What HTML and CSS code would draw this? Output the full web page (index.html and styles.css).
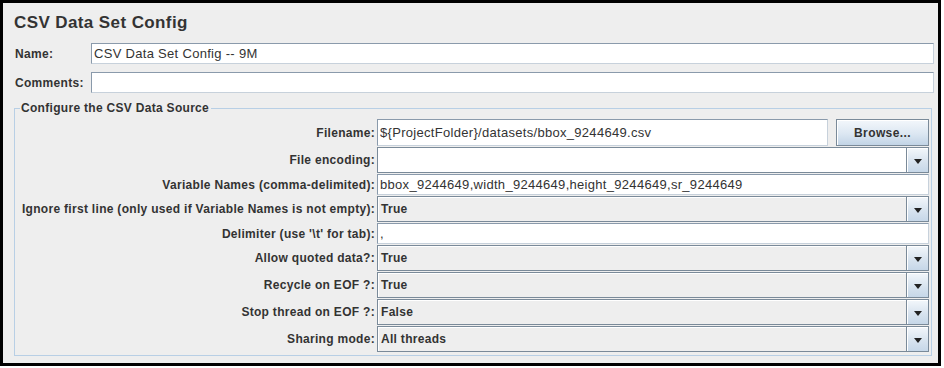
FILE: index.html
```html
<!DOCTYPE html>
<html>

<head>
  <meta charset="utf-8">
  <title>CSV Data Set Config</title>
  <link rel="stylesheet" href="styles.css">
</head>

<body>
  <div class="panel">
    <h1 class="title">CSV Data Set Config</h1>

    <div class="top-row">
      <label class="top-label">Name:</label>
      <div class="text-field">CSV Data Set Config -- 9M</div>
    </div>

    <div class="top-row">
      <label class="top-label">Comments:</label>
      <div class="text-field"></div>
    </div>

    <fieldset class="group">
      <legend>Configure the CSV Data Source</legend>

      <div class="form-grid">
        <label class="row-label">Filename:</label>
        <div class="file-row">
          <div class="text-field">${ProjectFolder}/datasets/bbox_9244649.csv</div>
          <button class="browse-btn">Browse...</button>
        </div>

        <label class="row-label">File encoding:</label>
        <div class="combo editable">
          <span class="combo-value"></span>
          <span class="combo-arrow"></span>
        </div>

        <label class="row-label">Variable Names (comma-delimited):</label>
        <div class="text-field">bbox_9244649,width_9244649,height_9244649,sr_9244649</div>

        <label class="row-label">Ignore first line (only used if Variable Names is not empty):</label>
        <div class="combo">
          <span class="combo-value">True</span>
          <span class="combo-arrow"></span>
        </div>

        <label class="row-label">Delimiter (use '\t' for tab):</label>
        <div class="text-field">,</div>

        <label class="row-label">Allow quoted data?:</label>
        <div class="combo">
          <span class="combo-value">True</span>
          <span class="combo-arrow"></span>
        </div>

        <label class="row-label">Recycle on EOF ?:</label>
        <div class="combo">
          <span class="combo-value">True</span>
          <span class="combo-arrow"></span>
        </div>

        <label class="row-label">Stop thread on EOF ?:</label>
        <div class="combo">
          <span class="combo-value">False</span>
          <span class="combo-arrow"></span>
        </div>

        <label class="row-label">Sharing mode:</label>
        <div class="combo">
          <span class="combo-value">All threads</span>
          <span class="combo-arrow"></span>
        </div>
      </div>
    </fieldset>
  </div>
</body>

</html>
```

FILE: styles.css
```css
body {
  margin: 0;
  background-color: #ffffff;
  font-family: "Liberation Sans", Arial, sans-serif;
  font-size: 12px;
  letter-spacing: 0.3px;
  color: #333333;
}

.panel {
  box-sizing: border-box;
  width: 941px;
  height: 366px;
  border: 3px solid #000000;
  background-color: #eeeeee;
  padding: 10px 4px 0 11px;
}

.title {
  margin: 0 0 10px 0;
  font-size: 17px;
  line-height: 20px;
  letter-spacing: 0.4px;
  font-weight: bold;
  color: #333333;
}

.top-row {
  display: flex;
  align-items: center;
  margin-bottom: 8px;
}

.top-label {
  width: 76px;
  padding-left: 1px;
  font-weight: bold;
}

.text-field {
  box-sizing: border-box;
  flex-grow: 1;
  height: 21px;
  line-height: 20px;
  padding: 0 2px;
  font-size: 13px;
  background-color: #ffffff;
  border: 1px solid #8a9aab;
  border-right-color: #c7d1db;
  border-bottom-color: #c7d1db;
  white-space: nowrap;
  overflow: hidden;
}

.group {
  margin: 0 2px 0 0;
  padding: 4px 2px 3px 5px;
  border: 1px solid #b8cfe5;
  min-width: 0;
}

.group legend {
  padding: 0 2px 0 1px;
  margin-left: 0;
  font-weight: bold;
  line-height: 14px;
}

.form-grid {
  display: grid;
  grid-template-columns: 357px 1fr;
  row-gap: 1px;
  align-items: center;
}

.row-label {
  text-align: right;
  padding-right: 2px;
  font-weight: bold;
  white-space: nowrap;
}

.file-row {
  display: flex;
  gap: 8px;
  height: 27px;
}

.file-row .text-field {
  height: 27px;
  line-height: 25px;
}

.browse-btn {
  width: 93px;
  height: 27px;
  padding: 0;
  font-family: inherit;
  font-size: 12px;
  letter-spacing: 0.4px;
  font-weight: bold;
  color: #333333;
  border: 1px solid #7a8a99;
  border-radius: 0;
  background: linear-gradient(#f3f7fb, #dce7f2 55%, #c2d4e6);
  box-shadow: inset 1px 1px 0 #ffffff;
}

.combo {
  box-sizing: border-box;
  display: flex;
  height: 26px;
  border: 1px solid #7a8a99;
  background-color: #eeeeee;
  box-shadow: inset 1px 1px 0 #ffffff;
}

.combo.editable {
  background-color: #ffffff;
}

.combo-value {
  flex-grow: 1;
  padding-left: 3px;
  line-height: 24px;
  font-weight: bold;
}

.combo-arrow {
  width: 21px;
  display: flex;
  align-items: center;
  justify-content: center;
  border-left: 1px solid #7a8a99;
  background: linear-gradient(#f3f7fb, #d6e2ee 60%, #c6d7e8);
  box-shadow: inset 1px 1px 0 #ffffff;
}

.combo-arrow::after {
  content: "";
  width: 0;
  height: 0;
  border-left: 4px solid transparent;
  border-right: 4px solid transparent;
  border-top: 5px solid #222222;
  margin-top: 2px;
}
```
